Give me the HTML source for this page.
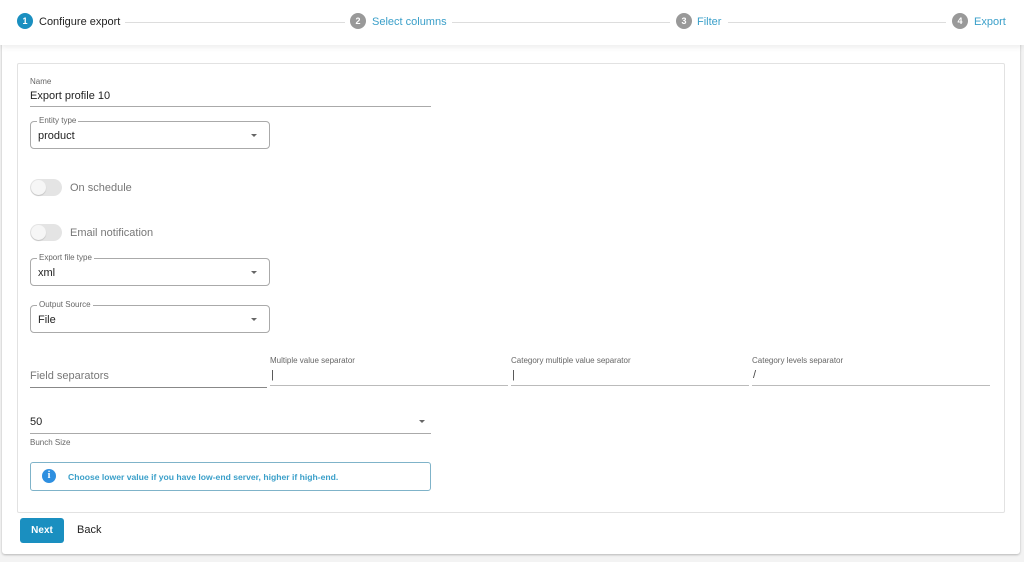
<!DOCTYPE html>
<html><head><meta charset="utf-8"><style>
*{margin:0;padding:0;box-sizing:border-box}
body{width:1024px;height:562px;background:#f3f3f3;font-family:"Liberation Sans",sans-serif;position:relative;overflow:hidden;color:#333}
.a{position:absolute}
.card{left:2px;top:0;width:1018px;height:554px;background:#fff;box-shadow:0 1px 2px rgba(0,0,0,.25);border-radius:0 0 3px 3px}
.hdr{left:0;top:0;width:1024px;height:45px;background:#fff;box-shadow:0 2px 6px rgba(0,0,0,.08)}
.circ{width:16px;height:16px;border-radius:50%;color:#fff;font-size:9px;text-align:center;line-height:16px;font-weight:bold}
.line{height:1px;background:#ddd}
.st{font-size:11px;top:16px}
.panel{left:17px;top:63px;width:988px;height:450px;border:1px solid #e2e2e2;border-radius:2px}
.lbl{font-size:8px;color:#666}
.sel{width:240px;height:28px;border:1px solid #aaa;border-radius:4px}
.sel .l{position:absolute;left:6px;top:-6px;background:#fff;font-size:8px;color:#666;padding:0 2px}
.sel .v{position:absolute;left:7px;top:8px;font-size:11px;color:#222}
.sel .ar{position:absolute;right:12px;top:12px;border-left:3.5px solid transparent;border-right:3.5px solid transparent;border-top:3.5px solid #666}
.tg{width:32px;height:17px;border-radius:9px;background:#e4e4e4}
.tg:after{content:"";position:absolute;left:1px;top:1px;width:15px;height:15px;border-radius:50%;background:#f6f6f6;box-shadow:0 1px 1px rgba(0,0,0,.15)}
.tl{font-size:11px;color:#777}
</style></head><body>
<div class="a card"></div>
<div class="a hdr"></div>
<div class="a circ" style="left:17px;top:13px;background:#1a8fc0">1</div>
<div class="a st" style="left:39px;color:#222">Configure export</div>
<div class="a line" style="left:125px;top:22px;width:220px"></div>
<div class="a circ" style="left:350px;top:13px;background:#999">2</div>
<div class="a st" style="left:372px;color:#3a9fc9">Select columns</div>
<div class="a line" style="left:452px;top:22px;width:218px"></div>
<div class="a circ" style="left:676px;top:13px;background:#999">3</div>
<div class="a st" style="left:697px;color:#3a9fc9">Filter</div>
<div class="a line" style="left:728px;top:22px;width:218px"></div>
<div class="a circ" style="left:952px;top:13px;background:#999">4</div>
<div class="a st" style="left:974px;color:#3a9fc9">Export</div>

<div class="a panel"></div>
<div class="a lbl" style="left:30px;top:77px">Name</div>
<div class="a" style="left:30px;top:90px;font-size:11px;color:#222">Export profile 10</div>
<div class="a" style="left:30px;top:106px;width:401px;height:1px;background:#aaa"></div>

<div class="a sel" style="left:30px;top:121px"><span class="l">Entity type</span><span class="v">product</span><i class="ar"></i></div>

<div class="a tg" style="left:30px;top:179px"></div>
<div class="a tl" style="left:70px;top:182px">On schedule</div>
<div class="a tg" style="left:30px;top:224px"></div>
<div class="a tl" style="left:70px;top:227px">Email notification</div>

<div class="a sel" style="left:30px;top:258px"><span class="l">Export file type</span><span class="v">xml</span><i class="ar"></i></div>
<div class="a sel" style="left:30px;top:305px"><span class="l">Output Source</span><span class="v">File</span><i class="ar"></i></div>

<div class="a" style="left:30px;top:370px;font-size:11px;color:#777">Field separators</div>
<div class="a" style="left:30px;top:387px;width:237px;height:1px;background:#888"></div>
<div class="a lbl" style="left:270px;top:356px">Multiple value separator</div>
<div class="a" style="left:271px;top:369px;font-size:11px;color:#444">|</div>
<div class="a" style="left:270px;top:385px;width:238px;height:1px;background:#bbb"></div>
<div class="a lbl" style="left:511px;top:356px">Category multiple value separator</div>
<div class="a" style="left:512px;top:369px;font-size:11px;color:#444">|</div>
<div class="a" style="left:511px;top:385px;width:238px;height:1px;background:#bbb"></div>
<div class="a lbl" style="left:752px;top:356px">Category levels separator</div>
<div class="a" style="left:753px;top:369px;font-size:11px;color:#444">/</div>
<div class="a" style="left:752px;top:385px;width:238px;height:1px;background:#bbb"></div>

<div class="a" style="left:30px;top:416px;font-size:11px;color:#222">50</div>
<div class="a" style="left:419px;top:420px;border-left:3.5px solid transparent;border-right:3.5px solid transparent;border-top:3.5px solid #666"></div>
<div class="a" style="left:30px;top:433px;width:401px;height:1px;background:#aaa"></div>
<div class="a lbl" style="left:30px;top:438px">Bunch Size</div>

<div class="a" style="left:30px;top:462px;width:401px;height:29px;border:1px solid #7fb3c9;border-radius:3px"></div>
<div class="a" style="left:42px;top:469px;width:14px;height:14px;border-radius:50%;background:#2e8fe0;color:#fff;font-size:10px;font-weight:bold;text-align:center;line-height:14px;font-family:'Liberation Serif',serif">i</div>
<div class="a" style="left:68px;top:472px;font-size:8.6px;font-weight:bold;color:#3a9fc9">Choose lower value if you have low-end server, higher if high-end.</div>

<div class="a" style="left:20px;top:518px;width:44px;height:25px;border-radius:3px;background:#1a8fc0;color:#fff;font-size:10px;font-weight:bold;text-align:center;line-height:25px">Next</div>
<div class="a" style="left:77px;top:524px;font-size:11px;color:#222">Back</div>
</body></html>
